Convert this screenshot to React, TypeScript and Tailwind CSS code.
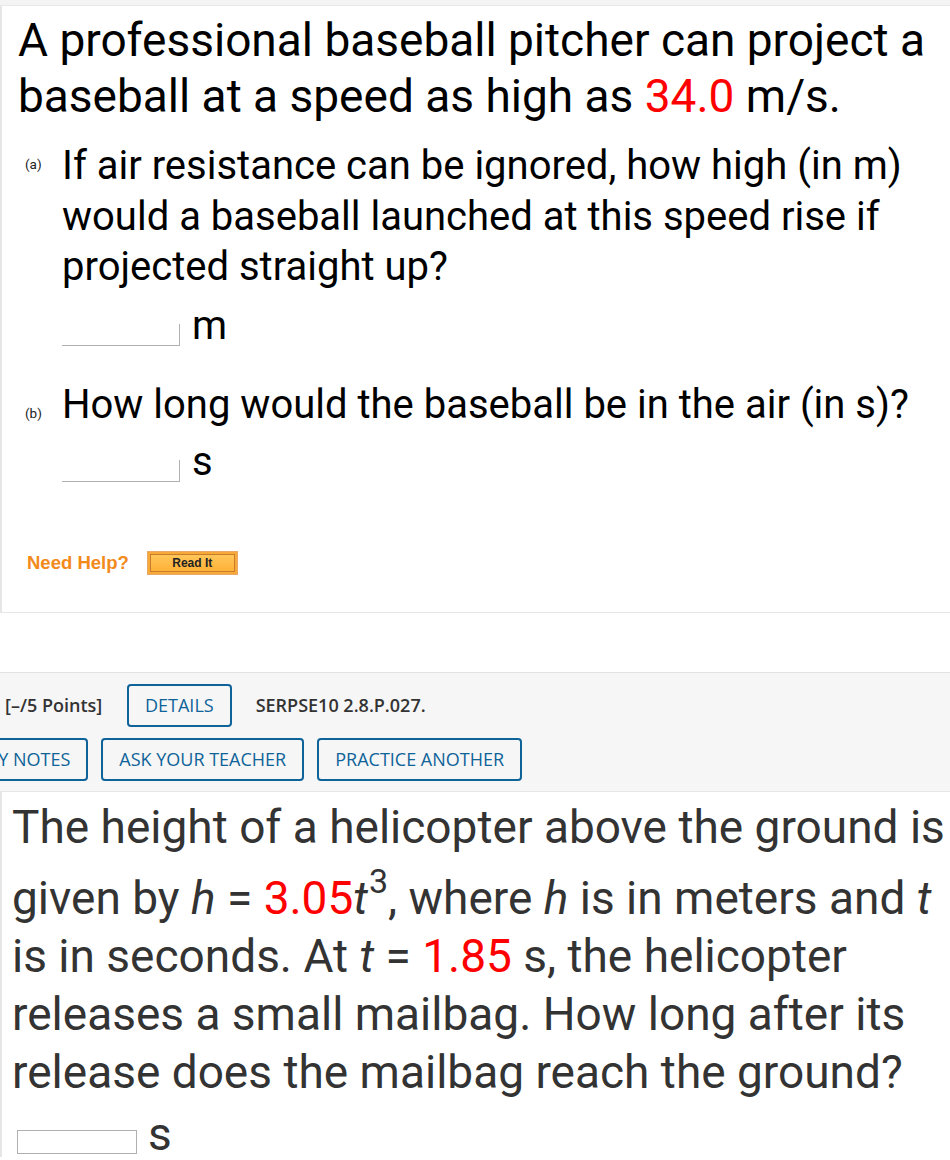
import React from "react";

const roboto = "font-['Roboto',_'Noto_Sans',_sans-serif]";
const openSans = "font-['Open_Sans',_'Noto_Sans',_sans-serif]";
const arial = "font-['Liberation_Sans',_Arial,_sans-serif]";

function Blank() {
  return <span className="inline-block w-[118px] h-[22px] border-b border-r border-[#b0b0b0]" />;
}

function ToolButton({ children }: { children: React.ReactNode }) {
  return (
    <button className="h-[43px] shrink-0 px-[16px] border-2 border-[#0e6399] rounded-[4px] text-[18px] text-[#0e6399] whitespace-nowrap">
      {children}
    </button>
  );
}

export default function App() {
  return (
    <div className={`w-[950px] h-[1160px] overflow-hidden bg-white ${roboto}`}>
      {/* strip above first panel */}
      <div className="h-[6px] bg-[#f4f4f4] border-b border-[#e8e8e8]" />

      {/* Question panel 1 */}
      <div className="h-[607px] border-l-2 border-b border-[#e6e6e6] pl-[16px]">
        <p className="text-[46px] leading-[56px] text-black pt-[6px]">
          A professional baseball pitcher can project a baseball at a speed as high as{" "}
          <span className="text-[#ff0000]">34.0</span> m/s.
        </p>

        <div className="flex mt-[17px]">
          <span className="w-[44px] shrink-0 pl-[7px] pt-[17px] text-[13.5px] leading-[13px] text-[#222]">(a)</span>
          <div className="text-[40px] leading-[50.5px] text-black">
            <p>
              If air resistance can be ignored, how high (in m) would a baseball launched at this speed rise if
              projected straight up?
            </p>
            <div className="flex items-end gap-[12px] mt-[13px] leading-[40px]">
              <Blank />
              <span>m</span>
            </div>
          </div>
        </div>

        <div className="flex mt-[34px]">
          <span className="w-[44px] shrink-0 pl-[7px] pt-[27px] text-[13.5px] leading-[13px] text-[#222]">(b)</span>
          <div className="text-[40px] leading-[50.5px] text-black">
            <p>How long would the baseball be in the air (in s)?</p>
            <div className="flex items-end gap-[12px] mt-[12px] leading-[40px]">
              <Blank />
              <span>s</span>
            </div>
          </div>
        </div>

        <div className="flex items-center gap-[18px] mt-[69px] pl-[9px] h-[24px]">
          <span className={`${arial} font-bold text-[18.5px] text-[#f28a1c]`}>Need Help?</span>
          <button className="w-[91px] h-[24px] border border-[#e8a868] bg-[#f7a93a] p-[2px]">
            <span
              className={`flex h-full items-center justify-center border border-[#c97d2c] bg-gradient-to-b from-[#ffc658] to-[#ffb136] ${arial} font-bold text-[12px] text-[#222]`}
            >
              Read It
            </span>
          </button>
        </div>
      </div>

      {/* gap */}
      <div className="h-[59px]" />

      {/* toolbar */}
      <div className={`h-[119px] bg-[#f6f6f6] border-t border-[#e3e3e3] pt-[11px] ${openSans}`}>
        <div className="flex items-center h-[43px]">
          <span className="pl-[5px] w-[127px] shrink-0 font-semibold text-[18px] text-[#333]">[–/5 Points]</span>
          <ToolButton>DETAILS</ToolButton>
          <span className="ml-[24px] font-semibold text-[18px] text-[#333]">SERPSE10 2.8.P.027.</span>
        </div>
        <div className="flex items-center gap-[13px] mt-[11px] -ml-[36px]">
          <ToolButton>MY NOTES</ToolButton>
          <ToolButton>ASK YOUR TEACHER</ToolButton>
          <ToolButton>PRACTICE ANOTHER</ToolButton>
        </div>
      </div>

      {/* Question panel 2 */}
      <div className="border-t border-l-2 border-[#e6e6e6] pl-[10px]">
        <p className="text-[46px] leading-[58px] text-[#333] pt-[6px]">
          The height of a helicopter above the ground is given by <i>h</i> ={" "}
          <span className="text-[#ff0000]">3.05</span>
          <i>t</i>
          <sup className="static text-[34px] leading-[50px] align-[21px] ml-[1px]">3</sup>, where <i>h</i> is in
          meters and <i>t</i> is in seconds. At <i>t</i> = <span className="text-[#ff0000]">1.85</span> s, the
          helicopter releases a small mailbag. How long after its release does the mailbag reach the ground?
        </p>
        <div className="flex items-end gap-[11px] mt-[10px] ml-[5px] text-[46px] leading-[46px]">
          <span className="inline-block w-[120px] h-[24px] mb-[3px] border border-[#b0b0b0]" />
          <span className="text-[#333]">s</span>
        </div>
      </div>
    </div>
  );
}
